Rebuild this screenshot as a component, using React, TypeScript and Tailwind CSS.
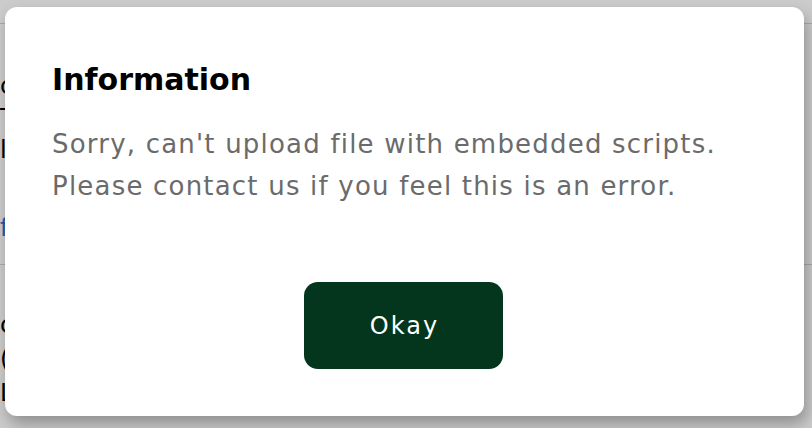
import React from 'react'

const font = { fontFamily: '"DejaVu Sans", Inter, sans-serif' }

export default function App() {
  return (
    <div className="relative w-[812px] h-[428px] overflow-hidden bg-white" style={font}>
      {/* page behind the dialog */}
      <div className="flex flex-col text-[24px] text-black leading-none">
        <div className="h-[24px] border-b border-gray-300" />
        <div className="pt-[50px] flex flex-col gap-[8px]">
          <span>cc</span>
          <span>Tt</span>
          <span>ll</span>
          <span className="pt-[46px] text-[#2f6fd6]">ff</span>
        </div>
        <div className="mt-[24px] border-b border-gray-300" />
        <div className="pt-[48px] flex flex-col gap-[10px]">
          <span>cc</span>
          <span>((</span>
          <span>LL</span>
        </div>
      </div>

      {/* overlay */}
      <div className="absolute inset-0 bg-black/20 flex items-start pt-[7px] pl-[5px]">
        <div className="w-[799px] h-[409px] bg-white rounded-[12px] shadow-[3px_8px_16px_rgba(0,0,0,0.3)] flex flex-col pl-[47px] pr-[30px] pt-[53px] pb-[47px]">
          <h2 className="text-[30px] font-bold text-black leading-[40px]">Information</h2>
          <p className="mt-[23px] text-[26px] leading-[42px] text-[#6b6b6b] tracking-[1.2px]">
            Sorry, can't upload file with embedded scripts.
            <br />
            Please contact us if you feel this is an error.
          </p>
          <div className="mt-auto flex justify-center pr-[19px]">
            <button className="w-[199px] h-[87px] rounded-[14px] bg-[#03361c] text-white text-[24px] tracking-[2px] pl-[2px]">
              Okay
            </button>
          </div>
        </div>
      </div>
    </div>
  )
}
